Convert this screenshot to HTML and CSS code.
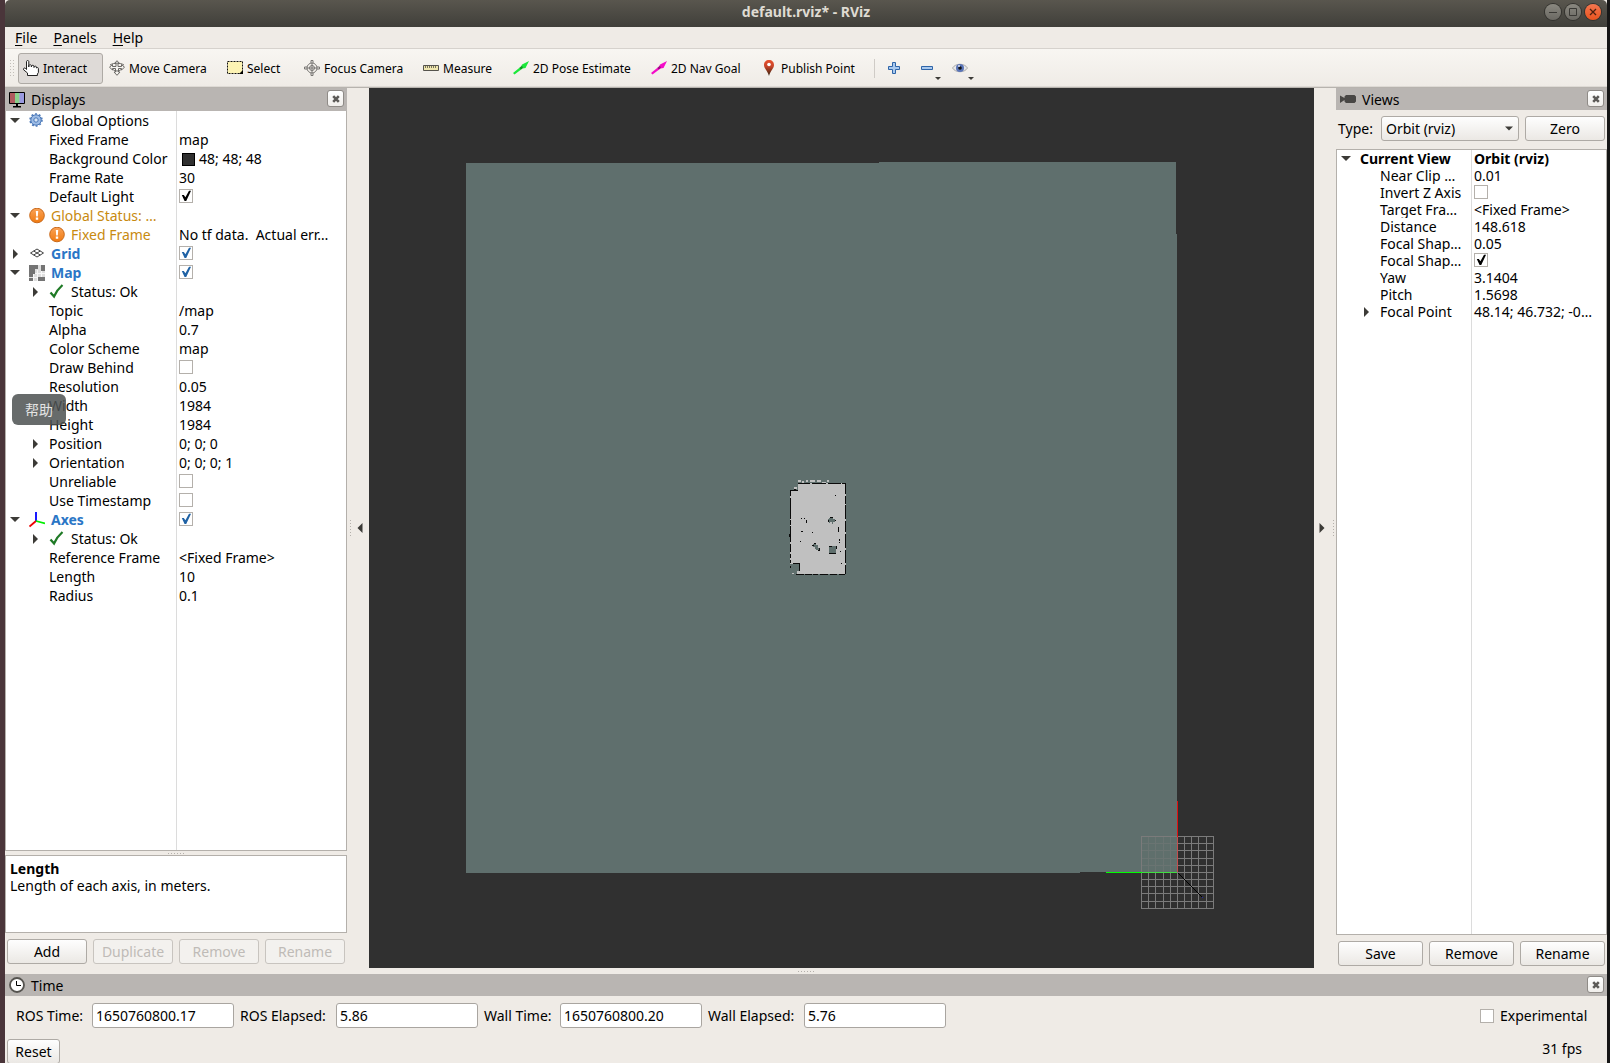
FILE: index.html
```html
<!DOCTYPE html>
<html lang="en">
<head>
<meta charset="utf-8">
<title>default.rviz* - RViz</title>
<link rel="stylesheet" href="styles.css">
</head>
<body>
<svg class="defs" width="0" height="0" aria-hidden="true">
  <defs>
    <linearGradient id="pin-fill" x1="0" y1="0" x2="0" y2="1">
      <stop offset="0" stop-color="#e8502c"/><stop offset=".4" stop-color="#c8452a"/><stop offset="1" stop-color="#33200c"/>
    </linearGradient>
    <linearGradient id="warn-fill" x1="0" y1="0" x2="0" y2="1">
      <stop offset="0" stop-color="#f9a257"/><stop offset="1" stop-color="#f07a10"/>
    </linearGradient>
    <symbol id="close" viewBox="0 0 8 8"><path d="M1.2 1.2 6.8 6.8M6.8 1.2 1.2 6.8" stroke="#5c5a57" stroke-width="2.6"/></symbol>
    <symbol id="warn" viewBox="0 0 16 16">
      <circle cx="8" cy="7.500" r="7.300" fill="url(#warn-fill)" stroke="#c96a1c"/>
      <path d="M6.800 3h2.400l-.4 5.500H7.200zM6.800 9.500h2.400v2.200H6.800z" fill="#fff"/>
    </symbol>
    <symbol id="ok" viewBox="0 0 16 16"><path d="M1.500 8.500 5 12.500C7 8 9.500 4.500 13.500 1" fill="none" stroke="#1f7a26" stroke-width="2.300"/></symbol>
    <symbol id="down" viewBox="0 0 10 6"><path d="M0 .5h10L5 5.500z" fill="#3c3b37"/></symbol>
    <symbol id="right" viewBox="0 0 6 10"><path d="M.5 0v10L5.500 5z" fill="#3c3b37"/></symbol>
    <symbol id="arrow2d" viewBox="0 0 16 16"><path d="M0 13 8 6.500 9 4.500 16 1 12.500 8 9.500 8.500 1.500 14.500z" fill="currentColor"/><path d="M6.500 7.500 8.500 6l1.500 1-1 2-1.500.5z" fill="#000" opacity=".35"/></symbol>
  </defs>
</svg>

<div class="window">
  <header class="titlebar">
    <h1>default.rviz* - RViz</h1>
    <div class="winbuttons">
      <button type="button" aria-label="Minimize"><svg viewBox="0 0 16 16"><path d="M4 8.500h8" stroke="#3a3935"/></svg></button>
      <button type="button" aria-label="Maximize"><svg viewBox="0 0 16 16"><path d="M4.500 4.500h7v7h-7z" stroke="#3a3935" fill="none"/></svg></button>
      <button type="button" class="quit" aria-label="Close"><svg viewBox="0 0 16 16"><path d="m5 5 6 6m0-6-6 6" stroke="#4c2010" stroke-width="1.300"/></svg></button>
    </div>
  </header>

  <nav class="menubar">
    <button type="button"><u>F</u>ile</button>
    <button type="button"><u>P</u>anels</button>
    <button type="button"><u>H</u>elp</button>
  </nav>

  <div class="toolbar">
    <span class="grip"></span>
    <div class="tools">
      <button type="button" class="active"><svg viewBox="0 0 16 16"><path d="M4.500 15.500V13L.6 9.800C0 8.500 1.300 7.500 2.300 8.300L3.500 9.500V1.500C3.500.2 5.800.2 5.800 1.500V7 5.500c.5-1 2.200-1 2.600 0V7 6c.5-1 2.200-1 2.600 0v1.500-.7c.5-.9 2-.9 2.400 0V8c.5-.8 2-.6 2 .5V12.500l-1 1.500v1.500z" fill="#fff" stroke="#222"/></svg>Interact</button>
      <button type="button"><svg viewBox="0 0 16 16" fill="#f6f4f0" stroke="#6a6865"><path d="m8 .7 2.500 2.800H9v3h3.500V4.500l3 2.700-3 2.800V8.500H9.500v3.500h1.500L8 15.300 5 12h1.500V8.500H3.500V10l-3-2.800 3-2.700v2H7v-3H5.500z"/><path d="M1 5C5 2.500 11 2.500 15 5M4 9.500c2 2 6 2 8 0" fill="none"/></svg>Move Camera</button>
      <button type="button"><svg viewBox="0 0 16 16"><path d="M.5 1.500h15v12H.5z" fill="#fdf3b4" stroke="#111" stroke-dasharray="2 1"/><path d="M16 10v4h-4z"/></svg>Select</button>
      <button type="button"><svg viewBox="0 0 16 16" fill="none" stroke="#777572"><circle cx="8" cy="8" r="5"/><circle cx="8" cy="8" r="2.500"/><path d="M7 3V.5h2V3M7 13v2.500h2V13M3 7H.5v2H3M13 7h2.500v2H13M8 3v10M3 8h10"/></svg>Focus Camera</button>
      <button type="button"><svg viewBox="0 0 16 16"><path d="M.5 5.500h15v5H.5z" fill="#efe6ae" stroke="#55534d"/><path d="M2.500 6v2m2-2v2m2-2v2m2-2v2m2-2v2m2-2v2" stroke="#77735c"/></svg>Measure</button>
      <button type="button"><svg class="pose" viewBox="0 0 16 16"><use href="#arrow2d"/></svg>2D Pose Estimate</button>
      <button type="button"><svg class="goal" viewBox="0 0 16 16"><use href="#arrow2d"/></svg>2D Nav Goal</button>
      <button type="button"><svg viewBox="0 0 16 16"><path d="M8 0c3 0 5 2 5 5 0 3.500-3.500 5.500-5 11C6.500 10.500 3 8.500 3 5c0-3 2-5 5-5z" fill="url(#pin-fill)"/><circle cx="8" cy="4.500" r="1.800" fill="#fff"/></svg>Publish Point</button>
    </div>
    <span class="sep"></span>
    <button type="button" class="small" aria-label="Add tool"><svg viewBox="0 0 16 16"><path d="M6.500 2.500h3v4h4v3h-4v4h-3v-4h-4v-3h4z" fill="#a9c9ee" stroke="#2f65a8"/></svg></button>
    <button type="button" class="small" aria-label="Remove tool"><svg viewBox="0 0 16 16"><path d="M2.500 6.500h11v3h-11z" fill="#a9c9ee" stroke="#2f65a8"/></svg><i class="drop"></i></button>
    <button type="button" class="small" aria-label="Tool visibility"><svg viewBox="0 0 16 16"><path d="M.5 8C3.500 3 12.500 3 15.500 8 12.500 13 3.500 13 .5 8z" fill="#e8e8e8" stroke="#aaa"/><circle cx="8" cy="8" r="4" fill="#5b75b8"/><circle cx="8" cy="8" r="1.800" fill="#111"/><circle cx="7" cy="6" r="1" fill="#dfe6f5"/></svg><i class="drop"></i></button>
  </div>

  <main class="workspace">
    <section class="dock displays">
      <div class="dockhead">
        <svg viewBox="0 0 16 16"><path d="M1 1h5v10H1z" fill="#b05a5e"/><path d="M6 1h4.500v10H6z" fill="#8ad08c"/><path d="M10.500 1H15v10h-4.500z" fill="#9a9ae0"/><path d="M.5.500h15v11H.5z" fill="none" stroke="#000"/><path d="M7 12h2v2h3v1.500H4V14h3z"/></svg>
        <h2>Displays</h2>
        <button type="button" class="dockclose" aria-label="Close Displays"><svg viewBox="0 0 8 8"><use href="#close"/></svg></button>
      </div>
      <div class="tree">
        <table>
          <tbody>
            <tr><th scope="row"><div><i class="open"></i><svg viewBox="0 0 16 16"><circle cx="7" cy="7" r="5.200" fill="#9dbce6" stroke="#4a78b8"/><circle cx="7" cy="7" r="6" fill="none" stroke="#4a78b8" stroke-width="1.500" stroke-dasharray="1.900 1.900"/><circle cx="7" cy="7" r="2.200" fill="#d7e4f5" stroke="#4a78b8"/></svg><span>Global Options</span></div></th><td></td></tr>
            <tr class="sub"><th scope="row"><div><i></i><span>Fixed Frame</span></div></th><td>map</td></tr>
            <tr class="sub"><th scope="row"><div><i></i><span>Background Color</span></div></th><td><span class="swatch"></span>48; 48; 48</td></tr>
            <tr class="sub"><th scope="row"><div><i></i><span>Frame Rate</span></div></th><td>30</td></tr>
            <tr class="sub"><th scope="row"><div><i></i><label for="light">Default Light</label></div></th><td><input type="checkbox" id="light" checked></td></tr>
            <tr class="warning"><th scope="row"><div><i class="open"></i><svg viewBox="0 0 16 16"><use href="#warn"/></svg><span>Global Status: …</span></div></th><td></td></tr>
            <tr class="sub warning"><th scope="row"><div><i></i><svg viewBox="0 0 16 16"><use href="#warn"/></svg><span>Fixed Frame</span></div></th><td>No tf data.&nbsp; Actual err…</td></tr>
            <tr class="display"><th scope="row"><div><i class="shut"></i><svg viewBox="0 0 16 16" fill="none" stroke="#444"><path d="M8 3 14.500 7 8 11 1.500 7zM4.700 5l6.600 4M11.300 5l-6.600 4"/></svg><label for="grid">Grid</label></div></th><td><input type="checkbox" id="grid" checked></td></tr>
            <tr class="display"><th scope="row"><div><i class="open"></i><svg viewBox="0 0 16 16"><path d="M0 0h16v16H0z" fill="#dedede"/><path d="M0 0h9v4H6v5H4v7H0zM12 0h4v6h-4zM9 12h7v4H9z" fill="#747474"/><path d="M4.500 9v7M8.500 5v11M12.500 6v6M6 8.500h10M0 12.500h9" stroke="#fff" opacity=".8"/></svg><label for="map">Map</label></div></th><td><input type="checkbox" id="map" checked></td></tr>
            <tr class="sub"><th scope="row"><div><i class="shut"></i><svg viewBox="0 0 16 16"><use href="#ok"/></svg><span>Status: Ok</span></div></th><td></td></tr>
            <tr class="sub"><th scope="row"><div><i></i><span>Topic</span></div></th><td>/map</td></tr>
            <tr class="sub"><th scope="row"><div><i></i><span>Alpha</span></div></th><td>0.7</td></tr>
            <tr class="sub"><th scope="row"><div><i></i><span>Color Scheme</span></div></th><td>map</td></tr>
            <tr class="sub"><th scope="row"><div><i></i><label for="behind">Draw Behind</label></div></th><td><input type="checkbox" id="behind"></td></tr>
            <tr class="sub"><th scope="row"><div><i></i><span>Resolution</span></div></th><td>0.05</td></tr>
            <tr class="sub"><th scope="row"><div><i></i><span>Width</span></div></th><td>1984</td></tr>
            <tr class="sub"><th scope="row"><div><i></i><span>Height</span></div></th><td>1984</td></tr>
            <tr class="sub"><th scope="row"><div><i class="shut"></i><span>Position</span></div></th><td>0; 0; 0</td></tr>
            <tr class="sub"><th scope="row"><div><i class="shut"></i><span>Orientation</span></div></th><td>0; 0; 0; 1</td></tr>
            <tr class="sub"><th scope="row"><div><i></i><label for="unreliable">Unreliable</label></div></th><td><input type="checkbox" id="unreliable"></td></tr>
            <tr class="sub"><th scope="row"><div><i></i><label for="stamp">Use Timestamp</label></div></th><td><input type="checkbox" id="stamp"></td></tr>
            <tr class="display"><th scope="row"><div><i class="open"></i><svg viewBox="0 0 16 16" fill="none" stroke-width="1.800"><path d="M7 9V0" stroke="#00f"/><path d="M7 9 .5 14.500" stroke="#e00"/><path d="m7 9 9 2.500" stroke="#0e0"/></svg><label for="axes">Axes</label></div></th><td><input type="checkbox" id="axes" checked></td></tr>
            <tr class="sub"><th scope="row"><div><i class="shut"></i><svg viewBox="0 0 16 16"><use href="#ok"/></svg><span>Status: Ok</span></div></th><td></td></tr>
            <tr class="sub"><th scope="row"><div><i></i><span>Reference Frame</span></div></th><td>&lt;Fixed Frame&gt;</td></tr>
            <tr class="sub"><th scope="row"><div><i></i><span>Length</span></div></th><td>10</td></tr>
            <tr class="sub"><th scope="row"><div><i></i><span>Radius</span></div></th><td>0.1</td></tr>
          </tbody>
        </table>
      </div>
      <div class="splitter"><span class="dots"></span></div>
      <div class="help"><b>Length</b><p>Length of each axis, in meters.</p></div>
      <div class="actions">
        <button type="button" class="push">Add</button>
        <button type="button" class="push" disabled>Duplicate</button>
        <button type="button" class="push" disabled>Remove</button>
        <button type="button" class="push" disabled>Rename</button>
      </div>
    </section>

    <div class="gutter left"><span class="vdots"></span><button type="button" aria-label="Hide left dock"><svg viewBox="0 0 6 10"><path d="M5.500 0v10L.5 5z" fill="#3c3b37"/></svg></button></div>

    <div class="view3d">
      <svg viewBox="0 0 945 880" shape-rendering="crispEdges" role="img" aria-label="Map view">
        <path d="M97 75H510V74H807V146H808V784H711V785H97z" fill="#5f6f6d"/>
        <path d="M772.500 748.500h72v72h-72zM779.500 748v73M786.500 748v73M794.500 748v73M801.500 748v73M808.500 748v73M815.500 748v73M822.500 748v73M829.500 748v73M837.500 748v73M772 755.500h73M772 762.500h73M772 770.500h73M772 777.500h73M772 784.500h73M772 791.500h73M772 798.500h73M772 805.500h73M772 813.500h73" fill="none" stroke="#7b7b7b"/>
        <path d="M773 749h35v35h-35z" fill="#5f6f6d" opacity=".6"/>
        <path d="M737 784.500h36" stroke="#0f0"/><path d="M773 784.500h35" stroke="#3fe03f"/>
        <path d="M808.500 713v36" stroke="#e01010"/><path d="M808.500 749v35" stroke="#c44e4e"/>
        <path d="m809 785 24 24" stroke="#000"/><path d="M833 809h1v1h-1z" fill="#22a"/>
        <g transform="translate(401 377) scale(.3333)">
          <path d="M84 55H227V328H88V294H82L76 298H61V76H84z" fill="#c0c0c0"/>
          <path d="M84 46h9v6h-9zM96 49h6v6h-6zM108 46h6v6h-6zM120 46h15v6h-15zM141 46h12v4h-12zM156 50h12v3h-12zM171 46h6v4h-6zM72 67h9v6h-9z" fill="#c0c0c0"/>
          <path d="M64 297h22v22H76l-6 6h-6z" fill="#5f6f6d"/>
          <path d="M80 318h8v10h-8zM66 324h6v4h-6z" fill="#c0c0c0"/>
          <path d="M178 158h12v4h6v9h-6v6h-4v-6h-5v3h-3v-6h-3v-5h3zM177 244h22v21h-21zM128 236h10v5h5v7h5v8h-9v-5h-3v-6h-8z" fill="#5f6f6d"/>
          <g stroke="#0b0b0b" stroke-width="3" fill="none">
            <path d="M84 55.500H120M126 55.500H168M174 55.500H213M216 55.500H227M61 76.500H84M71 73.500h6"/>
            <path d="M226 55V88M226 92V118M226 121V163M226 168V202M226 206V250M226 254V294M226 300V326"/>
            <path d="M61.500 76V93M61.500 98V162M61.500 166V181M61.500 184V232M61.500 238V262M61.500 268V280M61.500 286V294M61.500 302V309M58.500 207v9M88 294v24M70 295h18"/>
            <path d="M78 327.500h24M106 327.500h20M130 327.500h14M150 327.500h24M180 327.500h20M207 327.500h18"/>
            <path d="M93 160.500h4M102 160.500h3M109 165v9M93 199.500h6M126 202.500h3M90 229.500h3M195 91.500h3M205.500 186v14M208 222v6M208 231v4M210 259.500h4M213 295.500h4M126 240.500h6M132 236h6M143 257.500h6M148 248v9M176 244.500h10M177 265.500h20M199.500 244v8M180 158.500h9M176 165v6M196 165v4"/>
          </g>
        </g>
      </svg>
    </div>

    <div class="gutter right"><button type="button" aria-label="Hide right dock"><svg viewBox="0 0 6 10"><use href="#right"/></svg></button><span class="vdots"></span></div>

    <section class="dock views">
      <div class="dockhead">
        <svg viewBox="0 0 16 16"><path d="M0 4.500 4.500 7V5.500L6 4h8.500L16 5.500v5L14.500 12H6L4.500 10.500V9L0 12z" fill="#484644"/></svg>
        <h2>Views</h2>
        <button type="button" class="dockclose" aria-label="Close Views"><svg viewBox="0 0 8 8"><use href="#close"/></svg></button>
      </div>
      <div class="typerow">
        <label for="type">Type:</label>
        <div class="combo"><select id="type"><option>Orbit (rviz)</option></select><svg viewBox="0 0 10 6"><use href="#down"/></svg></div>
        <button type="button" class="push">Zero</button>
      </div>
      <div class="tree dense">
        <table>
          <tbody>
            <tr class="head"><th scope="row"><div><i class="open"></i><span>Current View</span></div></th><td>Orbit (rviz)</td></tr>
            <tr class="sub"><th scope="row"><div><i></i><span>Near Clip …</span></div></th><td>0.01</td></tr>
            <tr class="sub"><th scope="row"><div><i></i><label for="invert">Invert Z Axis</label></div></th><td><input type="checkbox" id="invert"></td></tr>
            <tr class="sub"><th scope="row"><div><i></i><span>Target Fra…</span></div></th><td>&lt;Fixed Frame&gt;</td></tr>
            <tr class="sub"><th scope="row"><div><i></i><span>Distance</span></div></th><td>148.618</td></tr>
            <tr class="sub"><th scope="row"><div><i></i><span>Focal Shap…</span></div></th><td>0.05</td></tr>
            <tr class="sub"><th scope="row"><div><i></i><label for="shape">Focal Shap…</label></div></th><td><input type="checkbox" id="shape" checked></td></tr>
            <tr class="sub"><th scope="row"><div><i></i><span>Yaw</span></div></th><td>3.1404</td></tr>
            <tr class="sub"><th scope="row"><div><i></i><span>Pitch</span></div></th><td>1.5698</td></tr>
            <tr class="sub"><th scope="row"><div><i class="shut"></i><span>Focal Point</span></div></th><td>48.14; 46.732; -0…</td></tr>
          </tbody>
        </table>
      </div>
      <div class="actions">
        <button type="button" class="push">Save</button>
        <button type="button" class="push">Remove</button>
        <button type="button" class="push">Rename</button>
      </div>
    </section>
  </main>

  <div class="splitter wide"><span class="dots"></span></div>

  <section class="time">
    <div class="dockhead">
      <svg viewBox="0 0 16 16"><circle cx="8" cy="8" r="7" fill="#fff" stroke="#55534f" stroke-width="1.800"/><path d="M7.500 4v4.500H12" fill="none" stroke="#000"/></svg>
      <h2>Time</h2>
      <button type="button" class="dockclose" aria-label="Close Time"><svg viewBox="0 0 8 8"><use href="#close"/></svg></button>
    </div>
    <div class="clocks">
      <label for="rt">ROS Time:</label><input type="text" id="rt" value="1650760800.17">
      <label for="re" class="long">ROS Elapsed:</label><input type="text" id="re" value="5.86">
      <label for="wt">Wall Time:</label><input type="text" id="wt" value="1650760800.20">
      <label for="we" class="long">Wall Elapsed:</label><input type="text" id="we" value="5.76">
      <div class="experimental"><input type="checkbox" id="exp"><label for="exp" class="long">Experimental</label></div>
    </div>
    <div class="status">
      <button type="button" class="push">Reset</button>
      <span>31 fps</span>
    </div>
  </section>
</div>
<div class="tooltip" lang="zh">帮助</div>
</body>
</html>
```
FILE: styles.css
```css
* { box-sizing: border-box; }

body {
  margin: 0;
  height: 100vh;
  overflow: hidden;
  padding: 0 3px 0 5px;
  background: linear-gradient(90deg, #4a353a 50%, #161616 50%);
  font: 14px/19px "Noto Sans", "Noto Sans CJK SC", sans-serif;
  color: #000;
}

h1, h2, p { margin: 0; }
button, input, select { font: inherit; color: inherit; margin: 0; }
button { padding: 0; border: 0; background: none; }
svg { display: block; flex: none; width: 16px; height: 16px; }
.defs { position: absolute; width: 0; height: 0; }

.window {
  display: flex;
  flex-direction: column;
  height: 100%;
  background: #efebe6;
}

/* Title bar */
.titlebar {
  flex: none;
  display: grid;
  grid-template-columns: 1fr auto 1fr;
  align-items: center;
  height: 27px;
  padding: 0 6px 3px 6px;
  border-radius: 5px 5px 0 0;
  background: linear-gradient(#59564e, #403f3a);
}
.titlebar h1 {
  grid-column: 2;
  font-size: 14px;
  line-height: 20px;
  color: #dfdbd2;
}
.winbuttons { display: flex; justify-content: flex-end; gap: 4px; }
.winbuttons button {
  width: 16px;
  height: 16px;
  border-radius: 50%;
  background: linear-gradient(#8a8880, #6b6963);
  box-shadow: 0 0 0 1px #33322e;
}
.winbuttons .quit { background: linear-gradient(#f4764f, #e9541f); }

/* Menus and tools */
.menubar {
  flex: none;
  display: flex;
  gap: 16px;
  height: 22px;
  padding: 0 10px;
  border-bottom: 1px solid #d6d2cd;
}
.menubar button { line-height: 21px; }
.menubar u { text-underline-offset: 2px; text-decoration-thickness: 1px; }

.toolbar {
  flex: none;
  display: flex;
  align-items: center;
  height: 39px;
  border-bottom: 1px solid #b7b3ae;
  box-shadow: inset 0 -1px #dedad5;
  background: linear-gradient(#f8f6f2, #efebe6);
  font-size: 12px;
}
.grip {
  width: 5px;
  height: 18px;
  margin: 0 4px 0 4px;
  background: radial-gradient(circle, #c2beb9 1px, transparent 1px) 0 0 / 3px 3px;
}
.tools {
  display: grid;
  grid-template-columns: 86px 118px 77px 119px 90px 138px 110px 118px;
}
.tools button {
  display: flex;
  align-items: center;
  gap: 4px;
  height: 31px;
  padding-left: 5px;
  white-space: nowrap;
}
.tools .active {
  padding-left: 4px;
  margin-right: 1px;
  border: 1px solid #aeaaa5;
  border-radius: 3px;
  background: #dedad7;
}
.pose { color: #1be83a; }
.goal { color: #f40cc8; }
.sep { width: 1px; height: 19px; margin-right: 3px; background: #cfcbc6; }
.small { position: relative; width: 33px; height: 31px; padding: 0 8px; }
.drop {
  position: absolute;
  right: 3px;
  bottom: 4px;
  border: 3px solid transparent;
  border-top-color: #3c3b37;
  border-bottom: 0;
}

/* Docks */
.workspace {
  flex: 1;
  min-height: 0;
  display: grid;
  grid-template-columns: 342px 22px 1fr 22px 271px;
}
.dock { display: flex; flex-direction: column; min-height: 0; min-width: 0; }
.dockhead {
  flex: none;
  display: flex;
  align-items: center;
  gap: 6px;
  height: 22px;
  padding: 0 3px 0 4px;
  background: #b9b5b2;
}
.displays .dockhead { height: 23px; }
.dockhead h2 { flex: 1; font-size: 14px; font-weight: 400; }
.dockclose {
  display: grid;
  place-items: center;
  width: 17px;
  height: 17px;
  border: 1px solid #8f8b87;
  border-radius: 3px;
  background: linear-gradient(#fff, #f0eeeb);
  align-self: flex-start;
  margin-top: 2px;
}
.dockclose svg { width: 8px; height: 8px; }

.tree {
  --name: 171px;
  flex: 1;
  min-height: 0;
  overflow: hidden;
  border: 1px solid #b4b0ab;
  border-top: 0;
  background: linear-gradient(#dcdcdc, #dcdcdc) calc(var(--name) - 1px) 0 / 1px 100% no-repeat #fff;
}
.tree table { width: 100%; table-layout: fixed; border-collapse: collapse; }
.tree th { width: var(--name); padding: 0; font-weight: 400; text-align: left; }
.tree td { padding: 0 0 0 2px; white-space: nowrap; overflow: hidden; }
.tree tr { height: 19px; }
.tree th > div { display: flex; align-items: center; height: 19px; white-space: nowrap; overflow: hidden; }
.tree th svg { margin-right: 6px; }
.tree th i { flex: none; display: grid; place-items: center; width: 18px; margin-right: 5px; }
.tree .sub th > div { padding-left: 20px; }
i.open::before { content: ""; border: 5px solid transparent; border-top-color: #3c3b37; border-bottom: 0; }
i.shut::before { content: ""; border: 5px solid transparent; border-left-color: #3c3b37; border-right: 0; }
.warning th { color: #c88a10; }
.display th { color: #2a76c6; font-weight: 700; }
.display input { color: #1f62a5; }
.tree td input { margin-bottom: 2px; }

.dense { --name: 135px; border-top: 1px solid #b4b0ab; line-height: 17px; }
.dense tr, .dense th > div { height: 17px; }
.dense .head th, .head td { font-weight: 700; }

.swatch {
  display: inline-block;
  width: 13px;
  height: 13px;
  margin: 0 4px 0 3px;
  border: 1px solid #000;
  background: #303030;
  vertical-align: -2px;
}

input[type="checkbox"] {
  appearance: none;
  display: block;
  width: 14px;
  height: 14px;
  border: 1px solid #b4b0ab;
  background: #fff;
}
input[type="checkbox"]:checked::before {
  content: "";
  display: block;
  width: 12px;
  height: 12px;
  background: currentColor;
  clip-path: polygon(15% 45%, 32% 45%, 45% 65%, 75% 10%, 92% 10%, 52% 95%, 38% 95%);
}

.splitter { flex: none; display: grid; place-items: center; height: 4px; }
.wide { height: 6px; }
.dots { width: 17px; height: 1px; background: repeating-linear-gradient(90deg, #b4b0ab 0 1px, transparent 1px 3px); }
.vdots { width: 1px; height: 17px; background: repeating-linear-gradient(#b4b0ab 0 1px, transparent 1px 3px); }

.help {
  flex: none;
  height: 78px;
  padding: 4px;
  border: 1px solid #b4b0ab;
  background: #fff;
  line-height: 17px;
}

.actions { flex: none; display: flex; gap: 6px; padding: 6px 2px 2px; }
.displays .actions { padding-bottom: 4px; }
.actions .push { flex: 1; }
.push {
  height: 25px;
  border: 1px solid #aeaaa5;
  border-radius: 3px;
  background: linear-gradient(#fefefe, #ebe8e4);
  line-height: 22px;
}
.push:disabled { color: #bfbbb7; border-color: #c8c4bf; background: #f3f1ee; }

.gutter { display: flex; align-items: center; justify-content: space-between; padding: 0 6px 0 3px; }
.gutter.right { padding: 0 2px 0 5px; }
.gutter svg { width: 6px; height: 10px; }

.view3d { background: #303030; min-width: 0; min-height: 0; }
.view3d svg { width: 100%; height: 100%; }

.typerow { flex: none; display: flex; align-items: center; gap: 6px; padding: 6px 2px 8px; }
.typerow label { width: 37px; }
.combo { position: relative; flex: 1; }
.combo select {
  appearance: none;
  display: block;
  width: 100%;
  height: 25px;
  padding: 0 20px 0 4px;
  border: 1px solid #aeaaa5;
  border-radius: 3px;
  background: linear-gradient(#fefefe, #ebe8e4);
}
.combo svg { position: absolute; right: 6px; top: 10px; width: 8px; height: 5px; }
.typerow .push { width: 80px; }

/* Time panel */
.time { flex: none; }
.clocks { display: flex; align-items: center; gap: 6px; padding: 7px 17px 0 11px; }
.clocks label { width: 70px; white-space: nowrap; }
.clocks .long { width: 90px; }
.clocks input[type="text"] {
  width: 142px;
  height: 25px;
  padding: 0 3px 1px;
  border: 1px solid #a9a5a0;
  border-radius: 3px;
  background: #fff;
}
.experimental { display: flex; align-items: center; gap: 6px; margin-left: auto; }
.status { display: flex; justify-content: space-between; gap: 6px; height: 35px; padding: 11px 25px 0 2px; }
.status .push { width: 53px; }

.tooltip {
  position: absolute;
  left: 12px;
  top: 394px;
  padding: 6px 13px;
  border-radius: 6px;
  background: rgba(78, 83, 83, .86);
  color: #e4e4e4;
}
```
